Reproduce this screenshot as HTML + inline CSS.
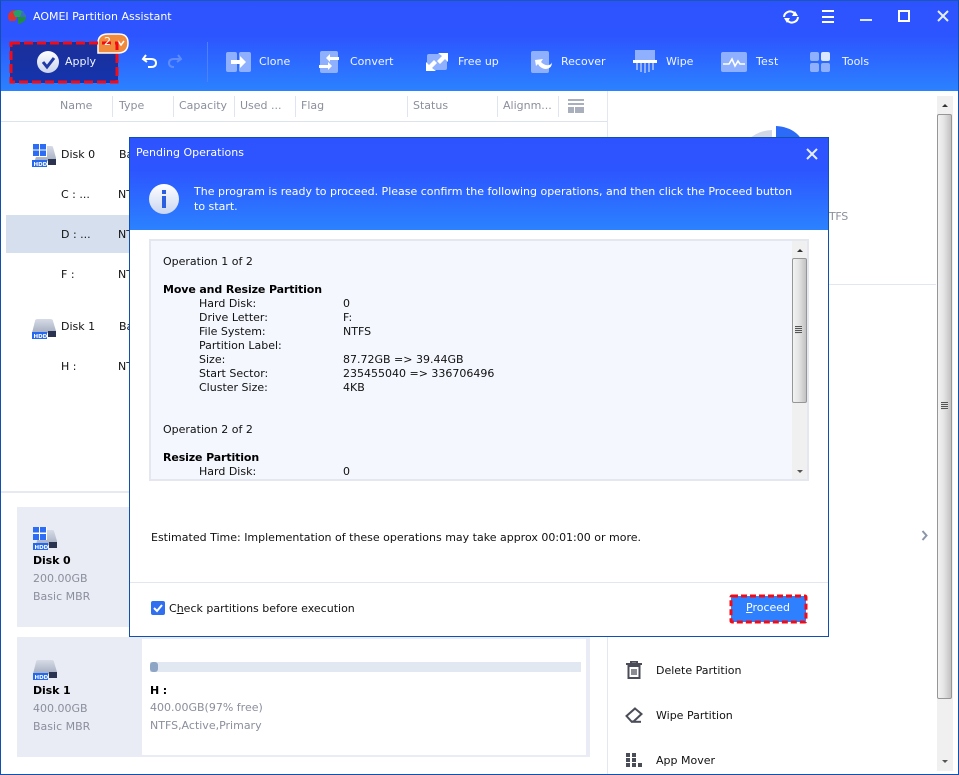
<!DOCTYPE html>
<html><head><meta charset="utf-8"><style>
html,body{margin:0;padding:0;width:959px;height:775px;overflow:hidden;background:#fff}
body{font-family:"DejaVu Sans","Liberation Sans",sans-serif;font-size:11px;color:#111;position:relative}
.a{position:absolute}
.t{position:absolute;white-space:nowrap;line-height:14px}
.w{color:#fff}.g{color:#8b8f9c}.b{font-weight:bold;color:#000;letter-spacing:-.12px}
.sep{position:absolute;top:96px;width:1px;height:21px;background:#e0e4f0}
.tb{font-size:11px;color:#f1f5ff}
.hl{font:bold 5.500px "DejaVu Sans",sans-serif;fill:#fff}
</style></head><body>
<svg width="0" height="0" style="position:absolute"><defs>
<linearGradient id="hd" x1="0" y1="0" x2="0" y2="1"><stop offset="0" stop-color="#d6dbe6"/><stop offset="1" stop-color="#a4adc0"/></linearGradient>
<linearGradient id="c" x1="0" y1="0" x2="0" y2="1"><stop offset="0" stop-color="#fff"/><stop offset="1" stop-color="#c9d3ec"/></linearGradient>
<linearGradient id="i" x1="0" y1="0" x2="0" y2="1"><stop offset="0" stop-color="#fff"/><stop offset="1" stop-color="#c9d6f2"/></linearGradient>
</defs></svg>
<div class="a" style="left:0;top:0;width:959px;height:91px;background:linear-gradient(#2d53ff 0,#2d55ff 40%,#2b82ff 100%)"></div>
<div class="a" style="left:0;top:0;width:957px;height:773px;border:1px solid #1150b0;z-index:30;pointer-events:none;border-top-color:#1a58b8"></div>

<svg class="a" style="left:7px;top:8px" width="20" height="18" viewBox="0 0 20 18"><path d="M1 8Q2 2 9 2L11 8 8 13H3Q1 12 1 8Z" fill="#d9342f"/><path d="M6 4Q11 0 17 4L13 9H8Z" fill="#26a06a"/><path d="M11 9H19Q19 14 11 16Z" fill="#1f8f3f"/><path d="M15 3 19 7 19 9H13Z" fill="#3a6fc0"/></svg>
<div class="t w" style="left:33px;top:10px;font-size:11px">AOMEI Partition Assistant</div>

<div class="a" style="left:10px;top:42px;width:108px;height:41px;background:linear-gradient(#1c2f98,#1434ad)"></div>
<svg class="a" style="left:0;top:0;z-index:2" width="140" height="60"><path d="M98 53V43Q98 34 108 34H119Q128 34 128 43Q128 53 118 53Z" fill="#f08a3c" stroke="#fff" stroke-width="1.500"/><path d="M118 41l3 4 3-4" stroke="#fff" stroke-width="1.500" fill="none"/></svg>
<svg class="a" style="left:0;top:0;z-index:4" width="140" height="90"><rect x="11" y="43" width="106" height="39" fill="none" stroke="#f40a14" stroke-width="3" stroke-dasharray="9 4"/></svg>
<div class="t w" style="left:104px;top:35px;font-size:11px;z-index:5">2</div>
<svg class="a" style="left:37px;top:51px" width="22" height="22"><circle cx="11" cy="11" r="11" fill="url(#c)"/><path d="M6 11l4 5 7-9" fill="none" stroke="#1f3aa8" stroke-width="3"/></svg>
<div class="t w tb" style="left:65px;top:55px">Apply</div>

<svg class="a" style="left:140px;top:53px" width="45" height="16"><path d="M6 2 3 6 7 9M3 6H11Q16 6 16 10 16 14 11 14H8" fill="none" stroke="#fff" stroke-width="2"/><path d="M38 2 41 6 37 9M41 6H34Q29 6 29 10 29 14 34 14" fill="none" stroke="#5e8cff" stroke-width="2"/></svg>
<div class="a" style="left:207px;top:42px;width:1px;height:40px;background:#4d80ff"></div>

<svg class="a" style="left:226px;top:52px" width="25" height="20"><rect x="0" y="0" width="11" height="20" rx="2" fill="#8fb0ff"/><rect x="13" y="0" width="12" height="20" rx="2" fill="#8fb0ff"/><path d="M5 8H14V4L20 10 14 16V12H5Z" fill="#fff"/></svg>
<div class="t tb" style="left:259px;top:55px">Clone</div>
<svg class="a" style="left:319px;top:51px" width="21" height="22"><rect x="1" y="0" width="18" height="22" rx="2" fill="#8fb0ff"/><path d="M20 6H11V3L7 7 11 11V9H20Z" fill="#fff"/><path d="M0 14H9V11L13 15 9 19V17H0Z" fill="#fff"/></svg>
<div class="t tb" style="left:350px;top:55px">Convert</div>
<svg class="a" style="left:426px;top:53px" width="22" height="18"><rect x="1" y="1" width="20" height="16" rx="2" fill="#8fb0ff"/><path d="M12 0H22V9L19 6 14 11 11 8 16 3ZM10 18H0V9L3 12 8 7 11 10 6 15Z" fill="#fff"/></svg>
<div class="t tb" style="left:458px;top:55px">Free up</div>
<svg class="a" style="left:531px;top:51px" width="22" height="22"><rect x="0" y="0" width="18" height="22" rx="2" fill="#8fb0ff"/><path d="M4 9 12 8 10 11Q14 15 18 14 21 13 21 11 21 18 14 18 9 17 7 13L5 15Z" fill="#fff"/></svg>
<div class="t tb" style="left:561px;top:55px">Recover</div>
<svg class="a" style="left:633px;top:50px" width="24" height="24"><rect x="2" y="0" width="20" height="10" fill="#8fb0ff"/><rect x="0" y="10" width="24" height="3" fill="#fff"/><path d="M3 13h2v7H3zM7 13h2v9H7zM11 13h2v10h-2zM15 13h2v9h-2zM19 13h2v7h-2z" fill="#8fb0ff"/></svg>
<div class="t tb" style="left:666px;top:55px">Wipe</div>
<svg class="a" style="left:721px;top:52px" width="26" height="20"><rect width="26" height="20" rx="2" fill="#8fb0ff"/><path d="M2 12H8L11 7 14 14 17 9 19 12H24" fill="none" stroke="#fff" stroke-width="1.600"/></svg>
<div class="t tb" style="left:756px;top:55px;letter-spacing:.2px">Test</div>
<svg class="a" style="left:810px;top:52px" width="20" height="20"><rect width="9" height="9" rx="2" fill="#8fb0ff"/><rect x="11" width="9" height="9" rx="2" fill="#dbe6ff"/><rect y="11" width="9" height="9" rx="2" fill="#8fb0ff"/><rect x="11" y="11" width="9" height="9" rx="2" fill="#8fb0ff"/></svg>
<div class="t tb" style="left:842px;top:55px">Tools</div>

<svg class="a" style="left:780px;top:8px" width="170" height="18"><path d="M4 9A6 6 0 0 1 14 5M18 9A6 6 0 0 1 8 13" fill="none" stroke="#fff" stroke-width="2"/><path d="M12 8H18L15 3ZM10 10H4L7 15Z" fill="#fff"/><path d="M42 3H54M42 9H54M42 14H54" stroke="#fff" stroke-width="2"/><path d="M80 12H92" stroke="#dfe8ff" stroke-width="2"/><rect x="119" y="3" width="10" height="10" fill="none" stroke="#fff" stroke-width="2"/><path d="M158 3 168 13M168 3 158 13" stroke="#e6edff" stroke-width="2"/></svg>

<div class="t g" style="left:60px;top:99px">Name</div>
<div class="t g" style="left:119px;top:99px">Type</div>
<div class="t g" style="left:179px;top:99px">Capacity</div>
<div class="t g" style="left:240px;top:99px">Used ...</div>
<div class="t g" style="left:301px;top:99px">Flag</div>
<div class="t g" style="left:413px;top:99px">Status</div>
<div class="t g" style="left:503px;top:99px">Alignm...</div>
<div class="sep" style="left:112px"></div><div class="sep" style="left:173px"></div><div class="sep" style="left:234px"></div><div class="sep" style="left:295px"></div><div class="sep" style="left:407px"></div><div class="sep" style="left:497px"></div><div class="sep" style="left:558px"></div>
<svg class="a" style="left:568px;top:99px" width="16" height="14"><path d="M0 0h16v2H0zM0 4h16v2H0z" fill="#a9afbc"/><path d="M0 8h6v6H0zM7 8h9v6H7z" fill="#a9afbc"/></svg>
<div class="a" style="left:1px;top:121px;width:606px;height:1px;background:#dde3ec"></div>
<div class="a" style="left:607px;top:91px;width:1px;height:684px;background:#e4e7ef"></div>

<div class="a" style="left:6px;top:215px;width:123px;height:38px;background:#d5dfee"></div>
<svg class="a" style="left:32px;top:143px" width="25" height="25"><path d="M3 17 7 4Q7 3 9 3H19Q21 3 21 4L24 15V18H3Z" fill="url(#hd)"/><rect x="0" y="0" width="15" height="14" fill="#fff"/><path d="M1 1h6v5.500H1zM8 1h6v5.500H8zM1 7.500h6V13H1zM8 7.500h6V13H8z" fill="#2d6cf5"/><rect x="16" y="16" width="8" height="6" fill="#2a3350"/><rect x="0" y="17" width="15" height="7" fill="#2468f0"/><text x="1.500" y="23" class="hl">HDD</text></svg>
<div class="t" style="left:61px;top:148px">Disk 0</div><div class="t" style="left:119px;top:148px">Ba</div>
<div class="t" style="left:61px;top:188px">C : ...</div><div class="t" style="left:118px;top:188px">NT</div>
<div class="t" style="left:61px;top:228px">D : ...</div><div class="t" style="left:118px;top:228px">NT</div>
<div class="t" style="left:61px;top:268px">F :</div><div class="t" style="left:118px;top:268px">NT</div>
<svg class="a" style="left:32px;top:319px" width="25" height="21"><path d="M0 14 3 2Q3 0 6 0H18Q21 0 21 2L24 12V14H0Z" fill="url(#hd)"/><rect x="16" y="12" width="8" height="6" fill="#2a3350"/><rect x="0" y="13" width="15" height="7" fill="#2468f0"/><text x="1.500" y="19" class="hl">HDD</text></svg>
<div class="t" style="left:61px;top:320px">Disk 1</div><div class="t" style="left:119px;top:320px">Ba</div>
<div class="t" style="left:61px;top:360px">H :</div><div class="t" style="left:118px;top:360px">NT</div>
<div class="a" style="left:1px;top:491px;width:606px;height:2px;background:#e6e9f0"></div>

<div class="a" style="left:17px;top:507px;width:573px;height:120px;background:#e9ecf4"></div>
<svg class="a" style="left:33px;top:527px" width="25" height="24"><path d="M3 17 7 4Q7 3 9 3H19Q21 3 21 4L24 14V18H3Z" fill="url(#hd)"/><rect x="0" y="0" width="14" height="13" fill="#fff"/><path d="M0 0h6v5.500H0zM7 0h6v5.500H7zM0 7h6v6H0zM7 7h6v6H7z" fill="#2d6cf5"/><rect x="16" y="15" width="8" height="6" fill="#2a3350"/><rect x="0" y="16" width="15" height="7" fill="#2468f0"/><text x="1.500" y="22" class="hl">HDD</text></svg>
<div class="t b" style="left:33px;top:554px">Disk 0</div>
<div class="t g" style="left:33px;top:572px">200.00GB</div>
<div class="t g" style="left:33px;top:590px">Basic MBR</div>

<div class="a" style="left:17px;top:637px;width:573px;height:120px;background:#e9ecf4"></div>
<div class="a" style="left:142px;top:639px;width:444px;height:116px;background:#fff"></div>
<svg class="a" style="left:33px;top:660px" width="25" height="21"><path d="M0 14 3 2Q3 0 6 0H18Q21 0 21 2L24 12V14H0Z" fill="url(#hd)"/><rect x="16" y="12" width="8" height="6" fill="#2a3350"/><rect x="0" y="13" width="15" height="7" fill="#2468f0"/><text x="1.500" y="19" class="hl">HDD</text></svg>
<div class="t b" style="left:33px;top:684px">Disk 1</div>
<div class="t g" style="left:33px;top:702px">400.00GB</div>
<div class="t g" style="left:33px;top:720px">Basic MBR</div>
<div class="a" style="left:150px;top:662px;width:431px;height:10px;background:#e2e8f2"></div>
<div class="a" style="left:150px;top:662px;width:8px;height:10px;border-radius:3px;background:#8fa5c6"></div>
<div class="t b" style="left:150px;top:684px">H :</div>
<div class="t g" style="left:150px;top:701px">400.00GB(97% free)</div>
<div class="t g" style="left:150px;top:719px">NTFS,Active,Primary</div>

<svg class="a" style="left:740px;top:120px" width="70" height="20"><path d="M8 20A36 36 0 0 1 32 10V20Z" fill="#d0d8e8"/><path d="M36 6Q54 7 62 20H36Z" fill="#2b6bf8"/></svg>
<div class="t g" style="left:829px;top:210px;letter-spacing:-.3px">TFS</div>
<div class="a" style="left:829px;top:284px;width:107px;height:1px;background:#e2e6f0"></div>
<svg class="a" style="left:920px;top:529px" width="9" height="13"><path d="M2.500 2 6.500 6.500 2.500 11" fill="none" stroke="#8d96a8" stroke-width="2"/></svg>

<svg class="a" style="left:625px;top:661px" width="18" height="18"><path d="M1 3H17M6 2V0.800H12V2" fill="none" stroke="#4a4d57" stroke-width="2"/><path d="M2.500 4H15.500V18H2.500Z" fill="#4a4d57"/><path d="M4.500 6H13.500V16H4.500Z" fill="#fff"/><path d="M7 8V14M9 8V14M11 8V14" stroke="#4a4d57" stroke-width="1.300"/></svg>
<div class="t" style="left:656px;top:664px">Delete Partition</div>
<svg class="a" style="left:625px;top:707px" width="18" height="17"><path d="M1.500 9 10 1.500 16.500 7 8.500 14.500H6.500Z" fill="none" stroke="#4a4d57" stroke-width="2"/><path d="M6 14.800H16" stroke="#4a4d57" stroke-width="2"/></svg>
<div class="t" style="left:656px;top:709px">Wipe Partition</div>
<svg class="a" style="left:626px;top:753px" width="16" height="14" fill="#4a4d57"><rect width="4" height="4"/><rect x="6" width="4" height="4"/><rect y="5" width="4" height="4"/><rect x="6" y="5" width="4" height="4"/><rect y="10" width="4" height="4"/><rect x="6" y="10" width="4" height="4"/><rect x="12" y="10" width="4" height="4"/></svg>
<div class="t" style="left:656px;top:754px">App Mover</div>

<div class="a" style="left:937px;top:96px;width:16px;height:675px;background:#f0f0f0"></div>
<svg class="a" style="left:942px;top:104px" width="6" height="3"><path d="M0 3 3 0 6 3Z" fill="#333"/></svg>
<svg class="a" style="left:942px;top:760px" width="6" height="3"><path d="M0 0 6 0 3 3Z" fill="#555"/></svg>
<div class="a" style="left:937px;top:114px;width:13px;height:583px;border:1px solid #969696;border-radius:2px;background:linear-gradient(90deg,#f3f3f3,#e4e4e4 45%,#c2c2c2 100%)"></div>
<div class="a" style="left:941px;top:402px;width:7px;height:8px;background:repeating-linear-gradient(#555 0,#555 1px,#ddd 1px,#ddd 2px)"></div>

<div class="a" style="left:129px;top:137px;width:698px;height:498px;border:1px solid #1150b0;background:#fff;z-index:10">
  <div class="a" style="left:0;top:0;width:698px;height:92px;background:linear-gradient(#2d53ff 0,#2d55ff 35%,#2b82ff 100%)"></div>
  <div class="t w" style="left:6px;top:8px">Pending Operations</div>
  <svg class="a" style="left:676px;top:10px" width="12" height="12"><path d="M1 1 11 11M11 1 1 11" stroke="#e6edff" stroke-width="2"/></svg>
  <svg class="a" style="left:19px;top:46px" width="30" height="30"><circle cx="15" cy="15" r="15" fill="url(#i)"/><rect x="13" y="6" width="4" height="4" fill="#2b5fe0"/><path d="M13 12H17V24H13Z" fill="#2b5fe0"/></svg>
  <div class="t w" style="left:64px;top:47px">The program is ready to proceed. Please confirm the following operations, and then click the Proceed button</div>
  <div class="t w" style="left:64px;top:62px">to start.</div>

  <div class="a" style="left:19px;top:101px;width:656px;height:238px;border:2px solid #e4e7f0;background:#f4f7fe">
    <div class="t" style="left:12px;top:14px">Operation 1 of 2</div>
    <div class="t b" style="left:12px;top:42px">Move and Resize Partition</div>
    <div class="t" style="left:48px;top:56px">Hard Disk:</div><div class="t" style="left:192px;top:56px">0</div>
    <div class="t" style="left:48px;top:70px">Drive Letter:</div><div class="t" style="left:192px;top:70px">F:</div>
    <div class="t" style="left:48px;top:84px">File System:</div><div class="t" style="left:192px;top:84px">NTFS</div>
    <div class="t" style="left:48px;top:98px">Partition Label:</div>
    <div class="t" style="left:48px;top:112px">Size:</div><div class="t" style="left:192px;top:112px">87.72GB =&gt; 39.44GB</div>
    <div class="t" style="left:48px;top:126px">Start Sector:</div><div class="t" style="left:192px;top:126px">235455040 =&gt; 336706496</div>
    <div class="t" style="left:48px;top:140px">Cluster Size:</div><div class="t" style="left:192px;top:140px">4KB</div>
    <div class="t" style="left:12px;top:182px">Operation 2 of 2</div>
    <div class="t b" style="left:12px;top:210px">Resize Partition</div>
    <div class="t" style="left:48px;top:224px">Hard Disk:</div><div class="t" style="left:192px;top:224px">0</div>
    <div class="a" style="left:641px;top:0;width:15px;height:238px;background:#f0f0f0">
      <svg class="a" style="left:5px;top:8px" width="6" height="3"><path d="M0 3 3 0 6 3Z" fill="#333"/></svg>
      <div class="a" style="left:0;top:17px;width:13px;height:143px;border:1px solid #969696;border-radius:2px;background:linear-gradient(90deg,#f3f3f3,#e4e4e4 45%,#c2c2c2 100%)"></div>
      <div class="a" style="left:3px;top:85px;width:7px;height:8px;background:repeating-linear-gradient(#555 0,#555 1px,#ddd 1px,#ddd 2px)"></div>
      <svg class="a" style="left:5px;top:229px" width="6" height="3"><path d="M0 0 6 0 3 3Z" fill="#555"/></svg>
    </div>
  </div>

  <div class="t" style="left:21px;top:393px">Estimated Time: Implementation of these operations may take approx 00:01:00 or more.</div>
  <div class="a" style="left:0;top:444px;width:698px;height:1px;background:#e2e6ee"></div>
  <svg class="a" style="left:21px;top:463px" width="14" height="14"><rect width="14" height="14" rx="2" fill="#2f6ff0"/><path d="M3 7l3 3 5-6" fill="none" stroke="#fff" stroke-width="2"/></svg>
  <div class="t" style="left:39px;top:464px">C<u>h</u>eck partitions before execution</div>
  <div class="a" style="left:601px;top:458px;width:75px;height:26px;background:#2f80ff;border-radius:2px"></div>
  <div class="t w" style="left:616px;top:463px"><u>P</u>roceed</div>
  <svg class="a" style="left:599px;top:456px" width="80" height="30"><rect x="2" y="2" width="75" height="26" rx="1" fill="none" stroke="#f40a14" stroke-width="3" stroke-dasharray="6 3"/></svg>
</div>
</body></html>
